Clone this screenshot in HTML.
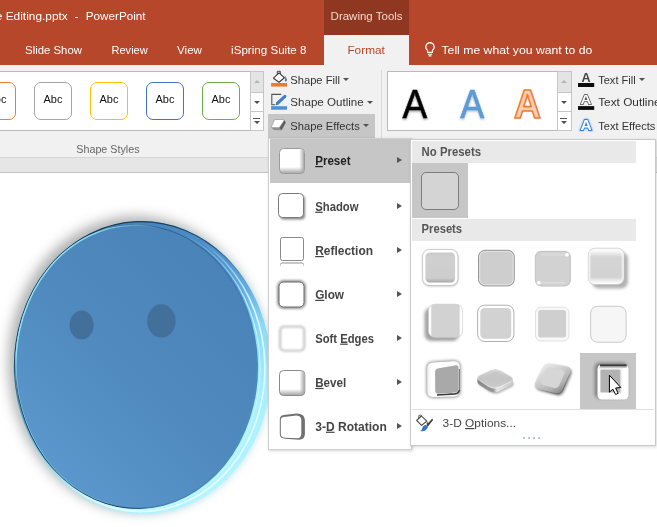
<!DOCTYPE html>
<html lang="en"><head><meta charset="utf-8"><title>PowerPoint - Shape Effects</title>
<style>
html,body{margin:0;padding:0}
body{width:657px;height:527px;overflow:hidden;background:#fff;font-family:"Liberation Sans",sans-serif}
#root{position:relative;width:657px;height:527px;overflow:hidden;background:#fff}
#root div,#root svg{position:absolute}
.abc{width:36px;height:36px;border-radius:7px;background:#fff;border:1.3px solid #999;top:82px}
.sb{left:250.3px;width:12.200px;background:#fff;border:1px solid #c6c6c6}
.sb2{left:557.400px;width:12.200px;background:#fff;border:1px solid #c6c6c6}
.arr{width:0;height:0;border-left:3px solid transparent;border-right:3px solid transparent;border-top:3.2px solid #505050}
.marr{width:0;height:0;border-top:3.700px solid transparent;border-bottom:3.700px solid transparent;border-left:5px solid #555}

</style></head><body>
<div id="root">
<!-- header -->
<div style="left:0;top:0;width:657px;height:65px;background:#B7472A"></div>
<div style="left:324px;top:0;width:85px;height:34.500px;background:#8F3721"></div>
<div style="left:324px;top:34.500px;width:85px;height:31.500px;background:#f1f1f1"></div>
<!-- ribbon -->
<div style="left:0;top:65px;width:657px;height:92px;background:#f1f1f1"></div>
<div style="left:0;top:157px;width:657px;height:1px;background:#d6d6d6"></div>
<div style="left:0;top:158px;width:657px;height:14px;background:#e6e6e6"></div>
<div style="left:0;top:172px;width:657px;height:1px;background:#c4c4c4"></div>
<!-- shape styles gallery -->
<div style="left:-2px;top:70.500px;width:252px;height:58px;background:#fff;border:1px solid #b9b9b9"></div>
<div class="abc" style="left:-22px;border-color:#ED7D31"></div>
<div class="abc" style="left:34px;border-color:#a5a5a5"></div>
<div class="abc" style="left:90px;border-color:#FFC000"></div>
<div class="abc" style="left:146px;border-color:#4472C4"></div>
<div class="abc" style="left:202px;border-color:#70AD47"></div>
<div class="sb" style="top:70.5px;height:20px;background:#e4e4e4"></div>
<div class="sb" style="top:91.5px;height:18.5px"></div>
<div class="sb" style="top:111px;height:17.500px"></div>
<div class="arr" style="left:253.800px;top:79.5px;border-top:none;border-bottom:3.5px solid #b5b5b5"></div>
<div class="arr" style="left:253.800px;top:100.5px"></div>
<div class="arr" style="left:253.800px;top:121px"></div>
<div style="left:253.400px;top:117.500px;width:7px;height:1.2px;background:#555"></div>
<!-- shape fill/outline/effects -->
<div style="left:268.3px;top:114px;width:106.5px;height:24px;background:#c6c6c6"></div>
<svg style="left:269px;top:70px" width="20" height="68" viewBox="0 0 20 68">
  <!-- fill icon -->
  <rect x="2.1" y="13" width="15.900" height="3.600" fill="#EA7A2E"/>
  <path d="M8.300 5.200 L8.300 1.300 L11.300 1.300 L11.300 4.200" fill="none" stroke="#444" stroke-width="1"/>
  <path d="M10 2.900 L15.400 7.700 L10 12.200 L4.500 8.200 Z" fill="#fff" stroke="#3f3f3f" stroke-width="1.150" stroke-linejoin="round"/>
  <path d="M15.700 5.400 Q18.700 8.800 17.500 11.300 Q16.300 12 15.900 10.700 Q16.900 8.400 15.700 5.400Z" fill="#2E75B6"/>
  <!-- outline icon -->
  <rect x="2.1" y="36.200" width="15.900" height="3.500" fill="#4A8FD8"/>
  <path d="M12.300 24.400 L2.800 24.400 L2.800 34.700 L6.200 34.700" fill="none" stroke="#555" stroke-width="1.100"/>
  <path d="M15.900 26.300 L8.600 33.200" stroke="#3A7EC8" stroke-width="3.100" stroke-linecap="round"/>
  <path d="M6.600 35.200 L7.300 32.300 L9.600 34.500 Z" fill="#3A7EC8"/>
  <!-- effects icon -->
  <path d="M2.500 57.500 L10 57.500 L12.600 60.300 L4.700 59.900 Z" fill="#8f8f8f"/>
  <path d="M14.900 49.600 L16.900 52.400 L12.600 60.300 L10 57.500 Z" fill="#606060"/>
  <path d="M6 49.500 L14.300 49.500 Q15.600 49.600 14.900 50.800 L10.800 57 Q10.400 57.600 9.600 57.600 L3.200 57.600 Q1.900 57.500 2.600 56.300 L5.200 50.300 Q5.500 49.600 6 49.500 Z" fill="#fff" stroke="#8a8a8a" stroke-width=".6"/>
</svg>
<div class="arr" style="left:342.500px;top:77.600px"></div>
<div class="arr" style="left:366.600px;top:100.500px"></div>
<div class="arr" style="left:362.5px;top:123.5px"></div>
<div style="left:381px;top:70px;width:1px;height:86px;background:#d9d9d9"></div>
<!-- wordart gallery -->
<div style="left:386.500px;top:70.500px;width:171px;height:58px;background:#fff;border:1px solid #b9b9b9"></div>
<div class="sb2" style="top:70.5px;height:20px;background:#e4e4e4"></div>
<div class="sb2" style="top:91.5px;height:18.5px"></div>
<div class="sb2" style="top:111px;height:17.500px"></div>
<div class="arr" style="left:560.800px;top:79.5px;border-top:none;border-bottom:3.5px solid #b5b5b5"></div>
<div class="arr" style="left:560.800px;top:100.5px"></div>
<div class="arr" style="left:560.800px;top:121px"></div>
<div style="left:560.400px;top:117.500px;width:7px;height:1.2px;background:#555"></div>
<svg style="left:500px;top:80px" width="56" height="46" viewBox="0 0 56 46">
  <text x="14" y="37.900" font-family="Liberation Sans, sans-serif" font-size="41" font-weight="700" fill="#F8CFB3" stroke="#ED7D31" stroke-width="1.700" stroke-linejoin="round" textLength="27" lengthAdjust="spacingAndGlyphs">A</text>
</svg>
<!-- text fill/outline/effects icons -->
<svg style="left:576px;top:70px;will-change:transform" width="20" height="68" viewBox="0 0 20 68">
  <defs><filter id="tg" x="-30%" y="-30%" width="160%" height="160%"><feDropShadow dx="0" dy="0" stdDeviation=".8" flood-color="#6aa8e6" flood-opacity=".9"/></filter></defs>
  <text x="10" y="12.200" text-anchor="middle" font-family="Liberation Sans, sans-serif" font-size="12.600" font-weight="700" fill="#444">A</text>
  <rect x="2" y="13" width="16.200" height="4" fill="#0c0c0c"/>
  <text x="4.600" y="34.300" font-family="Liberation Sans, sans-serif" font-size="12.600" font-weight="700" fill="#fff" stroke="#4a4a4a" stroke-width="1.300" paint-order="stroke" textLength="10.800" lengthAdjust="spacingAndGlyphs">A</text>
  <rect x="2" y="36.100" width="16.200" height="3.800" fill="#0c0c0c"/>
  <text x="10.100" y="59.900" text-anchor="middle" font-family="Liberation Sans, sans-serif" font-size="15.500" font-weight="700" fill="#fff" stroke="#3583d2" stroke-width="1.900" paint-order="stroke" filter="url(#tg)">A</text>
</svg>
<div class="arr" style="left:638.800px;top:77.600px"></div>
<!-- bulb -->
<svg style="left:423px;top:40px" width="14" height="18" viewBox="0 0 14 18">
  <path d="M7 2.6 A4.3 4.3 0 0 1 9.4 10.4 L9.4 12.4 L4.6 12.4 L4.6 10.4 A4.3 4.3 0 0 1 7 2.6 Z" fill="none" stroke="#fff" stroke-width="1.1"/>
  <path d="M4.9 14.2 L9.1 14.2 M5.6 15.9 L8.4 15.9" stroke="#fff" stroke-width="1.1"/>
</svg>
<!-- slide disc -->
<svg style="left:0;top:173px" width="300" height="354" viewBox="0 173 300 354">
  <defs>
    <filter id="blur6" x="-20%" y="-20%" width="140%" height="140%"><feGaussianBlur stdDeviation="6.5"/></filter>
    <filter id="blur3" x="-20%" y="-20%" width="140%" height="140%"><feGaussianBlur stdDeviation="3"/></filter>
    <linearGradient id="face" x1="0.85" y1="0.1" x2="0.15" y2="0.9">
      <stop offset="0" stop-color="#4A83B8"/><stop offset="0.5" stop-color="#4F89BE"/><stop offset="1" stop-color="#5C98CD"/>
    </linearGradient>
    <linearGradient id="rim" x1="0.2" y1="0" x2="0.7" y2="1">
      <stop offset="0" stop-color="#3f7db8"/><stop offset="0.15" stop-color="#4686c0"/><stop offset="0.36" stop-color="#4f93cc"/><stop offset="0.48" stop-color="#62abe2"/><stop offset="0.6" stop-color="#8ad9f4"/><stop offset="0.78" stop-color="#a6efff"/><stop offset="1" stop-color="#b6f6ff"/>
    </linearGradient>
    <linearGradient id="edge" x1="0.2" y1="0" x2="0.7" y2="1">
      <stop offset="0" stop-color="#1d2f42"/><stop offset="0.3" stop-color="#2a4a6b"/><stop offset="0.55" stop-color="#6fc0e6" stop-opacity="0"/><stop offset="1" stop-color="#b6f6ff" stop-opacity="0"/>
    </linearGradient>
    <linearGradient id="cy" x1="0" y1="0.3" x2="1" y2="0.5"><stop offset="0" stop-color="#8fe6fd"/><stop offset="0.3" stop-color="#8fe6fd" stop-opacity=".9"/><stop offset="0.55" stop-color="#8fe6fd" stop-opacity="0"/></linearGradient>
    <linearGradient id="cy2" x1="0" y1="0" x2="1" y2="0.8"><stop offset="0.45" stop-color="#bff8ff" stop-opacity="0"/><stop offset="0.7" stop-color="#c8faff" stop-opacity=".9"/></linearGradient>
    <linearGradient id="dk" x1="0.05" y1="1" x2="0.45" y2="0.6"><stop offset="0" stop-color="#14263a" stop-opacity=".9"/><stop offset="0.45" stop-color="#14263a" stop-opacity=".8"/><stop offset="0.64" stop-color="#14263a" stop-opacity="0"/></linearGradient>
    <linearGradient id="cy3" x1="0" y1="0" x2="1" y2="0.8"><stop offset="0.5" stop-color="#e8fdff" stop-opacity="0"/><stop offset="0.72" stop-color="#effeff" stop-opacity=".85"/></linearGradient>
    <linearGradient id="inedge" x1="0" y1="0.2" x2="1" y2="0.7">
      <stop offset="0" stop-color="#8fe3fb"/><stop offset="0.25" stop-color="#2c4f73"/><stop offset="0.6" stop-color="#3b6d9c"/><stop offset="1" stop-color="#4f8fc4"/>
    </linearGradient>
  </defs>
  <g transform="rotate(-2.1 142.6 367.6)">
    <ellipse cx="137.600" cy="363.600" rx="128.500" ry="147" fill="#555" opacity="0.5" filter="url(#blur6)"/>
    <ellipse cx="143.600" cy="368.800" rx="128" ry="146" fill="#9EEBFF" opacity="0.4" filter="url(#blur3)"/>
    <ellipse cx="142.600" cy="367.600" rx="128.500" ry="146.400" fill="url(#rim)"/>
    <ellipse cx="142.600" cy="367.600" rx="128.100" ry="146" fill="none" stroke="url(#edge)" stroke-width="1.200"/>
  </g>
  <g transform="rotate(-1.4 136.250 366.500)">
    <ellipse cx="136.550" cy="366.600" rx="121.500" ry="142.400" fill="url(#inedge)"/>
    <ellipse cx="136.250" cy="366.500" rx="120.300" ry="141.300" fill="url(#face)"/>
    <ellipse cx="136.350" cy="366.500" rx="120.500" ry="141.500" fill="none" stroke="url(#cy)" stroke-width="1.300"/>
    <ellipse cx="136.450" cy="366.700" rx="120.900" ry="141.800" fill="none" stroke="url(#dk)" stroke-width="1"/>
    <ellipse cx="137.850" cy="367" rx="122.300" ry="143" fill="none" stroke="url(#cy2)" stroke-width="1"/>
    <ellipse cx="139.900" cy="367.300" rx="125" ry="144.400" fill="none" stroke="url(#cy3)" stroke-width="1.600"/>
  </g>

  <ellipse cx="81.6" cy="325" rx="12" ry="14.5" fill="#42709B"/>
  <ellipse cx="161.4" cy="321" rx="14.2" ry="16.7" fill="#42709B"/>
</svg>
<!-- menu -->
<div style="left:268.300px;top:137.500px;width:141.700px;height:310.700px;background:#fff;border:1px solid #cfcfcf;box-shadow:1px 1px 3px rgba(0,0,0,.18)"></div>
<div style="left:270px;top:139.200px;width:140px;height:43.500px;background:#c6c6c6"></div>
<svg style="left:270px;top:139px" width="140" height="310" viewBox="270 139 140 310">
  <defs>
    <linearGradient id="bevB" x1="0" y1="0" x2="0" y2="1"><stop offset="0.74" stop-color="#fff"/><stop offset="1" stop-color="#a2a2a2"/></linearGradient>
    <linearGradient id="bevR" x1="0" y1="0" x2="1" y2="0"><stop offset="0.8" stop-color="#b0b0b0" stop-opacity="0"/><stop offset="1" stop-color="#a8a8a8"/></linearGradient>
    <filter id="b1" x="-30%" y="-30%" width="160%" height="160%"><feGaussianBlur stdDeviation="1"/></filter>
    <filter id="b15" x="-30%" y="-30%" width="160%" height="160%"><feGaussianBlur stdDeviation="1.6"/></filter>
    <linearGradient id="refl" x1="0" y1="0" x2="0" y2="1"><stop offset="0" stop-color="#888"/><stop offset="1" stop-color="#fff"/></linearGradient>
  </defs>
  <!-- preset -->
  <rect x="279.5" y="148.5" width="25" height="25" rx="4" fill="url(#bevB)" stroke="#9a9a9a" stroke-width="1"/>
  <rect x="280" y="149" width="24" height="24" rx="4" fill="url(#bevR)"/>
  <!-- shadow -->
  <rect x="280" y="195.500" width="25" height="24" rx="4" fill="#555" opacity="0.7" filter="url(#b1)"/>
  <rect x="278.5" y="193.500" width="25" height="24" rx="4" fill="#fff" stroke="#7a7a7a" stroke-width="1"/>
  <!-- reflection -->
  <rect x="280.500" y="237.500" width="23" height="23" rx="2" fill="#fff" stroke="#8a8a8a" stroke-width="1"/>
  <path d="M280.5 267 L280.5 264.5 Q280.5 263 282 263 L302 263 Q303.5 263 303.5 264.500 L303.5 267" fill="none" stroke="url(#refl)" stroke-width="1"/>
  <!-- glow -->
  <rect x="278.500" y="281.500" width="26" height="26" rx="5" fill="none" stroke="#999" stroke-width="3" filter="url(#b1)"/>
  <rect x="279" y="282" width="25" height="25" rx="4.500" fill="#fff" stroke="#666" stroke-width="1"/>
  <!-- soft edges -->
  <rect x="280.200" y="326.600" width="24" height="24" rx="4" fill="#fff" stroke="#b8b8b8" stroke-width="1.900" filter="url(#b1)"/>
  <!-- bevel -->
  <rect x="279.500" y="370.500" width="25.300" height="25" rx="4" fill="url(#bevB)" stroke="#8a8a8a" stroke-width="1"/>
  <rect x="280" y="371" width="24.300" height="24" rx="4" fill="url(#bevR)"/>
  <!-- 3d rotation -->
  <path d="M283.500 415 L296.500 413.400 Q304.900 413.800 304.900 420 L304.900 434 Q304.900 439.600 299 439.700 L285 438.800 Q279.800 438.400 279.800 434 L279.800 419.500 Q279.800 415.500 283.500 415 Z" fill="#707070"/>
  <path d="M283.800 417 L296.500 415.600 Q301.300 415.800 301.300 420.500 L301.300 433.500 Q301.300 438 297.500 438.300 L285 437.800 Q280.800 437.400 280.800 434 L280.800 420 Q280.800 417.400 283.800 417 Z" fill="#fff"/>
</svg>
<div class="marr" style="left:396.600px;top:156.9px"></div>
<div class="marr" style="left:396.600px;top:202.6px"></div>
<div class="marr" style="left:396.600px;top:246.8px"></div>
<div class="marr" style="left:396.600px;top:290.8px"></div>
<div class="marr" style="left:396.600px;top:334.6px"></div>
<div class="marr" style="left:396.600px;top:379.0px"></div>
<div class="marr" style="left:396.600px;top:422.5px"></div>
<!-- submenu -->
<div style="left:410.3px;top:139px;width:243.400px;height:305px;background:#fff;border:1px solid #c9c9c9;box-shadow:1px 1px 3px rgba(0,0,0,.15)"></div>
<div style="left:412.400px;top:141px;width:223.500px;height:21.700px;background:#e9e9e9"></div>
<div style="left:412.400px;top:162.700px;width:55.600px;height:55.800px;background:#c6c6c6"></div>
<div style="left:421.200px;top:172px;width:35.700px;height:35.600px;border-radius:5px;background:#d4d4d4;border:1px solid #7c7c7c"></div>
<div style="left:412.400px;top:218.500px;width:223.500px;height:22px;background:#e9e9e9"></div>
<div style="left:580.300px;top:353px;width:55.700px;height:56px;background:#c6c6c6"></div>
<div style="left:412px;top:409.300px;width:242px;height:1px;background:#e0e0ea"></div>
<svg style="left:411px;top:241px" width="243" height="204" viewBox="411 241 243 204">
  <defs>
    <filter id="s1" x="-40%" y="-40%" width="180%" height="180%"><feGaussianBlur stdDeviation="0.8"/></filter>
    <filter id="s2" x="-40%" y="-40%" width="180%" height="180%"><feGaussianBlur stdDeviation="1.8"/></filter>
    <linearGradient id="g11" x1="0" y1="0" x2="0" y2="1"><stop offset="0" stop-color="#c9c9c9"/><stop offset="0.15" stop-color="#d0d0d0"/><stop offset="0.85" stop-color="#cdcdcd"/><stop offset="1" stop-color="#a8a8a8"/></linearGradient>
    <linearGradient id="g14" x1="0" y1="0" x2="0" y2="1"><stop offset="0" stop-color="#fff"/><stop offset="0.1" stop-color="#f4f4f4"/><stop offset="0.24" stop-color="#d5d5d5"/><stop offset="0.8" stop-color="#d2d2d2"/><stop offset="0.93" stop-color="#f6f6f6"/><stop offset="1" stop-color="#fff"/></linearGradient>
    <linearGradient id="g14h" x1="0" y1="0" x2="1" y2="0"><stop offset="0" stop-color="#fff" stop-opacity=".9"/><stop offset="0.08" stop-color="#fff" stop-opacity="0"/><stop offset="0.92" stop-color="#fff" stop-opacity="0"/><stop offset="1" stop-color="#fff" stop-opacity=".9"/></linearGradient>
    <linearGradient id="g21" x1="0" y1="0" x2="1" y2="0"><stop offset="0" stop-color="#fff"/><stop offset="0.06" stop-color="#fff"/><stop offset="0.1" stop-color="#d2d2d2"/><stop offset="0.9" stop-color="#d2d2d2"/><stop offset="0.94" stop-color="#fff"/><stop offset="1" stop-color="#fff"/></linearGradient>
    <filter id="s05" x="-20%" y="-60%" width="140%" height="220%"><feGaussianBlur stdDeviation=".5"/></filter>
    <linearGradient id="g31" x1="0" y1="0" x2="1" y2="0"><stop offset="0" stop-color="#ededed"/><stop offset="0.12" stop-color="#fff"/><stop offset="1" stop-color="#fff"/></linearGradient>
    <linearGradient id="g32" x1="0" y1="0" x2="0" y2="1"><stop offset="0" stop-color="#d8d8d8"/><stop offset="0.5" stop-color="#c4c4c4"/><stop offset="1" stop-color="#cdcdcd"/></linearGradient>
    <linearGradient id="g32s" x1="0" y1="0" x2="1" y2="0"><stop offset="0" stop-color="#858585"/><stop offset="0.45" stop-color="#9a9a9a"/><stop offset="0.55" stop-color="#e6e6e6"/><stop offset="1" stop-color="#c8c8c8"/></linearGradient>
    <linearGradient id="g32e" x1="0" y1="0" x2="0" y2="1"><stop offset="0" stop-color="#fff"/><stop offset="0.5" stop-color="#eee" stop-opacity=".6"/><stop offset="1" stop-color="#fff" stop-opacity=".7"/></linearGradient>
    <linearGradient id="g33e" x1="0.1" y1="0" x2="0.8" y2="1"><stop offset="0" stop-color="#fff"/><stop offset="0.45" stop-color="#eee" stop-opacity=".3"/><stop offset="0.7" stop-color="#777" stop-opacity=".5"/><stop offset="1" stop-color="#666"/></linearGradient>
    <linearGradient id="g33" x1="0.1" y1="0" x2="0.8" y2="1"><stop offset="0" stop-color="#f4f4f4"/><stop offset="0.4" stop-color="#d2d2d2"/><stop offset="0.75" stop-color="#b0b0b0"/><stop offset="1" stop-color="#7c7c7c"/></linearGradient>
  </defs>
  <!-- r1 t1 -->
  <rect x="422.8" y="250" width="35.300" height="36.200" rx="7" fill="#777" opacity=".55" filter="url(#s1)"/>
  <rect x="422.600" y="249.500" width="35.300" height="36" rx="7" fill="#fff" stroke="#b5b5b5" stroke-width=".6"/>
  <rect x="425.400" y="252.400" width="29.700" height="30.200" rx="4.500" fill="url(#g11)"/>
  <!-- r1 t2 -->
  <rect x="478.500" y="250.300" width="35.800" height="35.600" rx="6.500" fill="#cecece" stroke="#8c8c8c" stroke-width=".9"/>
  <rect x="479.700" y="251.500" width="33.400" height="33.200" rx="5.500" fill="none" stroke="#e4e4e4" stroke-width=".9"/>
  <!-- r1 t3 -->
  <rect x="534.800" y="250.800" width="36.200" height="35.700" rx="6.500" fill="#d2d2d2"/>
  <rect x="535.500" y="251.500" width="34.800" height="34.300" rx="6" fill="none" stroke="#c6c6c6" stroke-width="1"/>
  <path d="M541 254.600 L565 254.600 M541 282.800 L565 282.800" stroke="#dcdcdc" stroke-width="1.600"/>
  <circle cx="567" cy="254.800" r="1.900" fill="#fff"/><circle cx="538.800" cy="282.600" r="1.900" fill="#fff"/>
  <!-- r1 t4 -->
  <rect x="592" y="252" width="36" height="36.500" rx="6.500" fill="#666" opacity=".5" filter="url(#s2)"/>
  <rect x="588.300" y="248.200" width="35.700" height="36.300" rx="6.500" fill="url(#g14)" stroke="#c4c4c4" stroke-width=".7"/>
  <rect x="588.600" y="248.500" width="35.100" height="35.700" rx="6.500" fill="url(#g14h)"/>
  <!-- r2 t1 -->
  <rect x="424.500" y="307.500" width="34.500" height="33.500" rx="6.500" fill="#666" opacity=".6" filter="url(#s2)"/>
  <rect x="428.400" y="304.200" width="34.100" height="33.300" rx="6.500" fill="url(#g21)" stroke="#c6c6c6" stroke-width=".6"/>
  <!-- r2 t2 -->
  <rect x="477.600" y="305.200" width="36.300" height="36.300" rx="7" fill="#fff" stroke="#9c9c9c" stroke-width=".8"/>
  <rect x="480.300" y="308" width="30.900" height="30.700" rx="4.500" fill="#d2d2d2"/>
  <!-- r2 t3 -->
  <rect x="535.500" y="307.200" width="33.500" height="33.800" rx="5.500" fill="#f8f8f8" stroke="#dedede" stroke-width=".9"/>
  <rect x="538.200" y="310" width="27.800" height="27.500" rx="2.500" fill="#cfcfcf"/>
  <!-- r2 t4 -->
  <rect x="590.600" y="306.300" width="35.500" height="36" rx="7" fill="#f6f6f6" stroke="#c4c4c4" stroke-width=".9"/>
  <!-- r3 t1 -->
  <path d="M433 362.500 L453.500 361.200 Q459.800 361.200 459.800 367 L459.800 390.500 Q459.800 396 454 396.400 L434 397 Q427.300 397 427.300 391.500 L427.200 369 Q427.200 362.800 433 362.500 Z" fill="#444" stroke="#444" stroke-width="2" opacity=".55" filter="url(#s2)"/>
  <path d="M433 362.500 L453.500 361.200 Q459.800 361.200 459.800 367 L459.800 390.500 Q459.800 396 454 396.400 L434 397 Q427.300 397 427.300 391.500 L427.200 369 Q427.200 362.800 433 362.500 Z" fill="url(#g31)"/>
  <path d="M437 395 L455 393.800 Q459.200 393.400 459.300 390" fill="none" stroke="#3c3c3c" stroke-width="1.700" filter="url(#s05)"/>
  <path d="M459.300 390 L459.300 369" stroke="#666" stroke-width="1"/>
  <path d="M437.500 368.500 L456 365.300 Q458.600 365.200 458.600 368 L458.600 389.500 Q458.600 392.200 456 392.500 L438.500 393.800 Q435.300 393.800 435.200 391 L435.100 371.500 Q435.100 368.800 437.500 368.500 Z" fill="#a9a9a9"/>
  <!-- r3 t2 -->
  <path d="M479.8 380.7 Q474.8 377.5 480.2 374.9 L490.4 369.9 Q495.8 367.3 500.9 370.4 L510.5 376.2 Q515.6 379.3 510.2 381.9 L499.2 387.1 Q493.8 389.7 488.8 386.5 Z" transform="translate(.8 5.200)" fill="#555" opacity=".5" filter="url(#s1)"/>
  <path d="M479.8 380.7 Q474.8 377.5 480.2 374.9 L490.4 369.9 Q495.8 367.3 500.9 370.4 L510.5 376.2 Q515.6 379.3 510.2 381.9 L499.2 387.1 Q493.8 389.7 488.8 386.5 Z" transform="translate(0 4.2)" fill="url(#g32s)"/><path d="M479.8 380.7 Q474.8 377.5 480.2 374.9 L490.4 369.9 Q495.8 367.3 500.9 370.4 L510.5 376.2 Q515.6 379.3 510.2 381.9 L499.2 387.1 Q493.8 389.7 488.8 386.5 Z" transform="translate(0 3.2)" fill="url(#g32s)"/><path d="M479.8 380.7 Q474.8 377.5 480.2 374.9 L490.4 369.9 Q495.8 367.3 500.9 370.4 L510.5 376.2 Q515.6 379.3 510.2 381.9 L499.2 387.1 Q493.8 389.7 488.8 386.5 Z" transform="translate(0 2.2)" fill="url(#g32s)"/><path d="M479.8 380.7 Q474.8 377.5 480.2 374.9 L490.4 369.9 Q495.8 367.3 500.9 370.4 L510.5 376.2 Q515.6 379.3 510.2 381.9 L499.2 387.1 Q493.8 389.7 488.8 386.5 Z" transform="translate(0 1.2)" fill="url(#g32s)"/>
  <path d="M479.8 380.7 Q474.8 377.5 480.2 374.9 L490.4 369.9 Q495.8 367.3 500.9 370.4 L510.5 376.2 Q515.6 379.3 510.2 381.9 L499.2 387.1 Q493.8 389.7 488.8 386.5 Z" fill="url(#g32)"/>
  <path d="M484.4 379.7 Q481.5 377.8 484.6 376.2 L492.4 372.4 Q495.5 370.8 498.5 372.6 L506.0 377.2 Q509.0 379.0 505.8 380.5 L497.4 384.5 Q494.2 386.0 491.3 384.1 Z" fill="#c6c6c6" opacity=".8" filter="url(#s05)"/>
  <path d="M479.8 380.7 Q474.8 377.5 480.2 374.9 L490.4 369.9 Q495.8 367.3 500.9 370.4 L510.5 376.2 Q515.6 379.3 510.2 381.9 L499.2 387.1 Q493.8 389.7 488.8 386.5 Z" fill="none" stroke="url(#g32e)" stroke-width=".9"/>
  <!-- r3 t3 -->
  <path d="M541.9 367.7 Q544.6 361.8 551.0 363.1 L566.0 366.1 Q572.4 367.4 569.9 373.4 L563.1 389.2 Q560.6 395.2 554.3 393.5 L538.9 389.3 Q532.6 387.6 535.3 381.7 Z" fill="#444" opacity=".55" filter="url(#s1)" transform="translate(1.400 1.800)"/>
  <path d="M541.9 367.7 Q544.6 361.8 551.0 363.1 L566.0 366.1 Q572.4 367.4 569.9 373.4 L563.1 389.2 Q560.6 395.2 554.3 393.5 L538.9 389.3 Q532.6 387.6 535.3 381.7 Z" fill="url(#g33)"/>
  <path d="M546.1 370.0 Q547.6 366.8 551.0 367.5 L562.2 369.7 Q565.6 370.4 564.2 373.6 L559.2 385.6 Q557.8 388.8 554.4 387.9 L543.0 384.9 Q539.6 384.0 541.1 380.8 Z" fill="#d6d6d6" filter="url(#s05)"/>
  <path d="M541.9 367.7 Q544.6 361.8 551.0 363.1 L566.0 366.1 Q572.4 367.4 569.9 373.4 L563.1 389.2 Q560.6 395.2 554.3 393.5 L538.9 389.3 Q532.6 387.6 535.3 381.7 Z" fill="none" stroke="url(#g33e)" stroke-width="1.100"/>
  <!-- r3 t4 -->
  <rect x="594.500" y="362.500" width="33" height="36" rx="5" fill="#6a6a6a" opacity=".7" filter="url(#s2)"/>
  <rect x="597.500" y="364.500" width="31" height="35" rx="4.500" fill="#fff"/>
  <rect x="599.800" y="364.300" width="27" height="2.300" rx="1.100" fill="#3a3a3a"/><rect x="599.800" y="366.400" width="27" height="1.200" fill="#9a9a9a"/>
  <rect x="600.400" y="369.600" width="19.600" height="23" rx="1" fill="#b2b2b2"/>
  <path d="M620.600 369.600 L620.600 393.200" stroke="#d8d8d8" stroke-width="1.400"/>
  <path d="M599 368.400 L622.500 368.400" fill="none" stroke="#ececec" stroke-width="1"/>
  <!-- cursor -->
  <path d="M609.400 375.200 L609.400 392.200 L612.900 389.200 L615.600 394.500 L618.200 393.300 L615.600 388 L620.800 387.500 Z" fill="#fff" stroke="#000" stroke-width="1" stroke-linejoin="miter"/>
  <!-- 3-D options icon -->
  <path d="M418.800 418.400 L418.800 415.600 Q420.200 414.300 421.400 415.700 L421.400 417" fill="none" stroke="#444" stroke-width=".9"/>
  <path d="M416.600 420.400 L421.500 416 L426.800 421.200 L421.600 425.400 Z" fill="#fff" stroke="#3f3f3f" stroke-width="1.050" stroke-linejoin="round"/>
  <path d="M427.300 421.600 Q428.500 423.600 427.700 424.600 Q426.600 424.800 426.600 423.500 Z" fill="#444"/>
  <path d="M432.300 418.400 L426.300 424.900 L427.900 426.500 L433.100 420 Z" fill="#3f3f3f"/>
  <path d="M426 425.100 Q422.800 425.300 422.200 428.500 Q422 430.200 420.200 430.900 Q425.400 432 427.200 428.600 Q428.300 426.900 427.700 426.300 Z" fill="#2E75C6"/>
  <!-- dots -->
  <g fill="#8ea9c4"><rect x="523.300" y="437.200" width="1.600" height="1.600"/><rect x="528.300" y="437.200" width="1.600" height="1.600"/><rect x="533.300" y="437.200" width="1.600" height="1.600"/><rect x="538.300" y="437.200" width="1.600" height="1.600"/></g>
</svg>

<svg style="left:0;top:0;will-change:transform" width="657" height="527" viewBox="0 0 657 527" font-family="Liberation Sans, sans-serif">
<defs><filter id="ts" x="-20%" y="-20%" width="140%" height="150%"><feDropShadow dx="0" dy="1.2" stdDeviation=".9" flood-color="#000" flood-opacity=".45"/></filter><filter id="ts2" x="-20%" y="-20%" width="140%" height="150%"><feDropShadow dx="0" dy="1.2" stdDeviation=".9" flood-color="#345" flood-opacity=".4"/></filter></defs>
<text y="20" font-size="11.8" fill="#fff"><tspan x="-4.2" textLength="71.9" lengthAdjust="spacingAndGlyphs">e Editing.pptx</tspan> <tspan x="74.8" textLength="3.6" lengthAdjust="spacingAndGlyphs">-</tspan> <tspan x="85.7" textLength="59.9" lengthAdjust="spacingAndGlyphs">PowerPoint</tspan></text>
<text x="330.6" y="20.0" font-size="11.8" fill="#f3d6cc" textLength="72.0" lengthAdjust="spacingAndGlyphs">Drawing Tools</text>
<text x="25.1" y="54.0" font-size="11.8" fill="#fff" textLength="56.9" lengthAdjust="spacingAndGlyphs">Slide Show</text>
<text x="111.5" y="54.0" font-size="11.8" fill="#fff" textLength="36.2" lengthAdjust="spacingAndGlyphs">Review</text>
<text x="177.0" y="54.0" font-size="11.8" fill="#fff" textLength="25.0" lengthAdjust="spacingAndGlyphs">View</text>
<text x="231.1" y="54.0" font-size="11.8" fill="#fff" textLength="75.4" lengthAdjust="spacingAndGlyphs">iSpring Suite 8</text>
<text x="347.4" y="54.0" font-size="11.8" fill="#B7472A" textLength="37.5" lengthAdjust="spacingAndGlyphs">Format</text>
<text x="441.5" y="54.0" font-size="11.8" fill="#fff" textLength="150.8" lengthAdjust="spacingAndGlyphs">Tell me what you want to do</text>
<text x="-12.5" y="103.0" font-size="11" fill="#111" textLength="19.0" lengthAdjust="spacingAndGlyphs">Abc</text>
<text x="43.5" y="103.0" font-size="11" fill="#111" textLength="19.0" lengthAdjust="spacingAndGlyphs">Abc</text>
<text x="99.5" y="103.0" font-size="11" fill="#111" textLength="19.0" lengthAdjust="spacingAndGlyphs">Abc</text>
<text x="155.5" y="103.0" font-size="11" fill="#111" textLength="19.0" lengthAdjust="spacingAndGlyphs">Abc</text>
<text x="211.5" y="103.0" font-size="11" fill="#111" textLength="19.0" lengthAdjust="spacingAndGlyphs">Abc</text>
<text x="76.3" y="153.0" font-size="11" fill="#666" textLength="63.2" lengthAdjust="spacingAndGlyphs">Shape Styles</text>
<text x="290.3" y="83.6" font-size="11.8" fill="#333" textLength="49.6" lengthAdjust="spacingAndGlyphs">Shape Fill</text>
<text x="290.3" y="106.4" font-size="11.8" fill="#333" textLength="73.4" lengthAdjust="spacingAndGlyphs">Shape Outline</text>
<text x="290.3" y="129.8" font-size="11.8" fill="#333" textLength="69.5" lengthAdjust="spacingAndGlyphs">Shape Effects</text>
<text x="598.2" y="83.6" font-size="11.8" fill="#333" textLength="37.5" lengthAdjust="spacingAndGlyphs">Text Fill</text>
<text x="598.2" y="106.4" font-size="11.8" fill="#333" textLength="62.4" lengthAdjust="spacingAndGlyphs">Text Outline</text>
<text x="598.2" y="129.8" font-size="11.8" fill="#333" textLength="57.2" lengthAdjust="spacingAndGlyphs">Text Effects</text>
<text x="402.6" y="117.8" font-size="40" fill="#000" textLength="24.7" lengthAdjust="spacingAndGlyphs" stroke="#000" stroke-width=".5" filter="url(#ts)">A</text>
<text x="460.2" y="117.8" font-size="40" fill="#5B9BD5" textLength="24.0" lengthAdjust="spacingAndGlyphs" stroke="#5B9BD5" stroke-width=".6" filter="url(#ts2)">A</text>
<text x="315.2" y="165.0" font-size="12" fill="#222" textLength="35.3" lengthAdjust="spacingAndGlyphs" font-weight="700"><tspan text-decoration="underline">P</tspan>reset</text>
<text x="315.2" y="210.7" font-size="12" fill="#454545" textLength="43.3" lengthAdjust="spacingAndGlyphs" font-weight="700"><tspan text-decoration="underline">S</tspan>hadow</text>
<text x="315.2" y="255.0" font-size="12" fill="#454545" textLength="57.8" lengthAdjust="spacingAndGlyphs" font-weight="700"><tspan text-decoration="underline">R</tspan>eflection</text>
<text x="315.2" y="298.8" font-size="12" fill="#454545" textLength="28.8" lengthAdjust="spacingAndGlyphs" font-weight="700"><tspan text-decoration="underline">G</tspan>low</text>
<text x="315.2" y="342.6" font-size="12" fill="#454545" textLength="58.8" lengthAdjust="spacingAndGlyphs" font-weight="700">Soft <tspan text-decoration="underline">E</tspan>dges</text>
<text x="315.2" y="386.9" font-size="12" fill="#454545" textLength="31.1" lengthAdjust="spacingAndGlyphs" font-weight="700"><tspan text-decoration="underline">B</tspan>evel</text>
<text x="315.2" y="430.7" font-size="12" fill="#454545" textLength="71.6" lengthAdjust="spacingAndGlyphs" font-weight="700">3-<tspan text-decoration="underline">D</tspan> Rotation</text>
<text x="421.6" y="156.0" font-size="12" fill="#555" textLength="59.4" lengthAdjust="spacingAndGlyphs" font-weight="700">No Presets</text>
<text x="421.6" y="233.4" font-size="12" fill="#555" textLength="40.5" lengthAdjust="spacingAndGlyphs" font-weight="700">Presets</text>
<text x="442.6" y="427.0" font-size="11.8" fill="#444" textLength="73.4" lengthAdjust="spacingAndGlyphs">3-D <tspan text-decoration="underline">O</tspan>ptions...</text>
</svg>
</div>
</body></html>
